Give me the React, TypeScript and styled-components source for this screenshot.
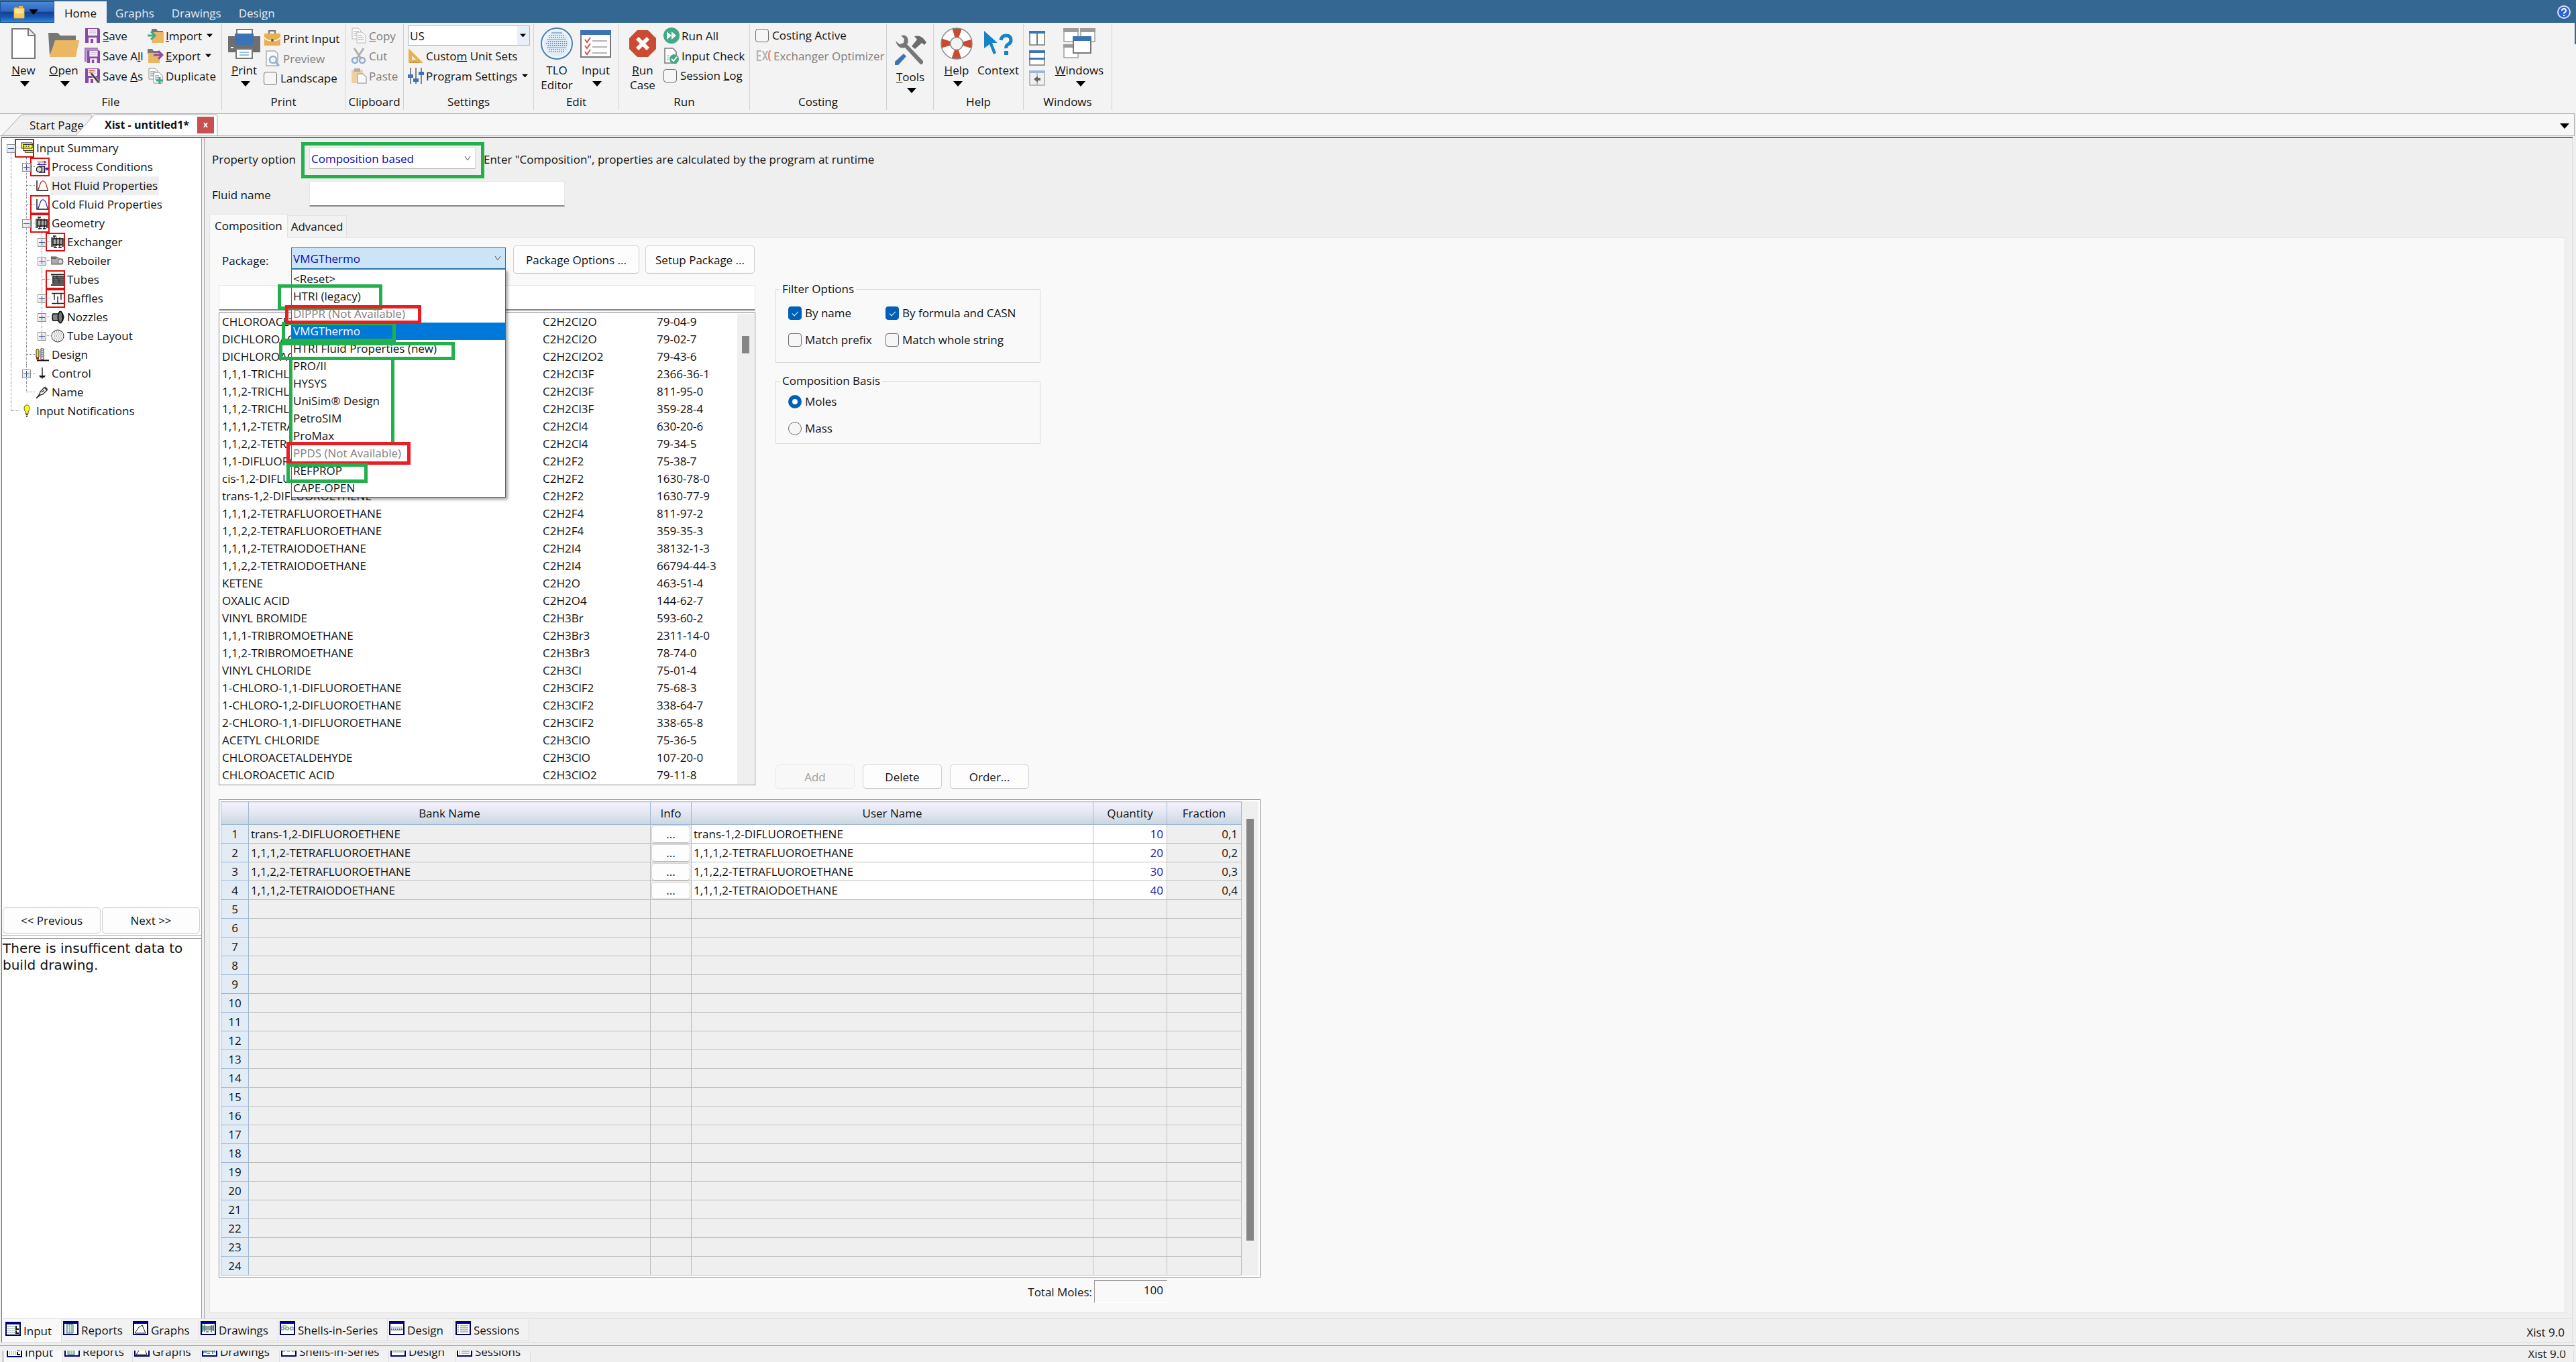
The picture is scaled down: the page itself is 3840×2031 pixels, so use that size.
import React from "react";
import styled, { createGlobalStyle, css } from "styled-components";

const GlobalStyle = createGlobalStyle`
  *, *::before, *::after { box-sizing: border-box; }
  body { margin: 0; background: #efefef; }
  body, button, input, select, table {
    font-family: "Open Sans", "Noto Sans", sans-serif;
    font-size: 17px;
    color: #111;
  }
  button { cursor: default; }
  ul { list-style: none; margin: 0; padding: 0; }
`;

const GREEN = "#22b04c";
const RED = "#ea1c24";

/* ---------- shell ---------- */

const Page = styled.div`
  min-height: 100vh;
  display: flex;
  flex-direction: column;
  line-height: 22px;
  white-space: nowrap;
`;

const TitleBar = styled.header`
  display: flex;
  align-items: stretch;
  height: 34px;
  padding-top: 2px;
  background: #346792;
`;

const AppButton = styled.button`
  width: 81px;
  display: flex;
  align-items: center;
  gap: 5px;
  padding: 0 0 0 19px;
  border: 1px solid #1b4f9a;
  background: linear-gradient(#4b86d8 0, #2f68c0 45%, #12408f 52%, #1b57b5 75%, #2f8ade 100%);
`;

const MenuTab = styled.button<{ $active?: boolean }>`
  border: 0;
  padding: 2px ${(p) => (p.$active ? 15 : 13)}px 0;
  background: ${(p) => (p.$active ? "#f3f3f3" : "transparent")};
  color: ${(p) => (p.$active ? "#111" : "#e8eef5")};
`;

const TitleHelp = styled.button`
  margin-left: auto;
  padding: 0 8px 0 0;
  border: 0;
  background: none;
  display: flex;
  align-items: center;
`;

/* ---------- ribbon ---------- */

const Ribbon = styled.div`
  display: flex;
  padding: 2px 0 5px;
  min-height: 135px;
  background: linear-gradient(#346792, #346792) right top / 2px 32px no-repeat, #f3f3f3;
`;

const Group = styled.section<{ $w: number }>`
  width: ${(p) => p.$w}px;
  display: flex;
  flex-direction: column;
  justify-content: space-between;
  border-right: 1px solid #d2d2d2;
`;

const GroupBody = styled.div<{ $pad?: number; $top?: number }>`
  display: flex;
  padding-left: ${(p) => p.$pad ?? 6}px;
  padding-top: ${(p) => p.$top ?? 0}px;
`;

const GroupName = styled.div`
  text-align: center;
  line-height: 24px;
`;

const Big = styled.button<{ $w: number }>`
  width: ${(p) => p.$w}px;
  padding: 5px 0 0;
  border: 0;
  background: none;
  display: flex;
  flex-direction: column;
  align-items: center;
  line-height: 22px;
  > svg { margin-bottom: 5px; }
`;

const ArrowLine = styled.span`
  height: 18px;
  padding: 0 0 0 4px;
  display: flex;
  align-items: center;
`;

const Stack = styled.div<{ $w: number; $top?: number }>`
  width: ${(p) => p.$w}px;
  padding-top: ${(p) => p.$top ?? 2}px;
`;

const Small = styled.button<{ $off?: boolean }>`
  height: 30px;
  padding: 0;
  border: 0;
  background: none;
  display: flex;
  align-items: center;
  gap: 3px;
  color: ${(p) => (p.$off ? "#7c7c7c" : "#111")};
  > svg:first-child { opacity: ${(p) => (p.$off ? 0.55 : 1)}; }
  > svg:last-child:not(:first-child) { margin-left: 4px; }
`;

const CheckLabel = styled.label`
  height: 30px;
  display: flex;
  align-items: center;
  gap: 5px;
`;

const Check = styled.input`
  appearance: none;
  flex: none;
  width: 20px;
  height: 20px;
  margin: 0;
  border: 1px solid #6b6b6b;
  border-radius: 4px;
  background: #f6f6f6;
  display: grid;
  place-items: center;
  &:checked { background: #005fb8; border-color: #005fb8; }
  &:checked::after {
    content: "";
    width: 5px;
    height: 9px;
    margin-bottom: 2px;
    border: solid #fff;
    border-width: 0 1px 1px 0;
    transform: rotate(45deg);
  }
`;

const Radio = styled.input`
  appearance: none;
  width: 20px;
  height: 20px;
  margin: 0;
  border: 1px solid #6b6b6b;
  border-radius: 50%;
  background: #f6f6f6;
  &:checked { border: 6px solid #005fb8; background: #fff; }
`;

const SelectBox = styled.div`
  position: relative;
  display: grid;
  align-items: center;
  > select, > svg { grid-area: 1 / 1; }
  > svg { justify-self: end; margin-right: 6px; pointer-events: none; z-index: 1; }
`;

const PackageBox = styled(SelectBox)`
  margin-top: 3px;
`;

const UnitSelect = styled.select`
  appearance: none;
  width: 182px;
  height: 30px;
  padding: 0 2px;
  border: 1px solid #a3b7d2;
  border-radius: 0;
  background: linear-gradient(to left, #e9eff8 18px, #fff 18px);
`;

/* ---------- document tabs ---------- */

const DocTabs = styled.div`
  height: 34px;
  display: flex;
  align-items: flex-end;
  border: 1px solid #adadad;
  border-left: 0;
  margin-right: 2px;
  background: #f7f7f7;
`;

const DocTab = styled.button<{ $active?: boolean }>`
  position: relative;
  height: 32px;
  padding: 0;
  border: 0;
  background: none;
  display: flex;
  align-items: center;
  gap: 12px;
  padding-left: 44px;
  width: ${(p) => (p.$active ? 212 : 112)}px;
  font-weight: ${(p) => (p.$active ? 700 : 400)};
  font-size: ${(p) => (p.$active ? 16 : 17)}px;
  z-index: ${(p) => (p.$active ? 2 : 1)};
  > svg { position: absolute; left: 0; top: 0; z-index: -1; }
`;

const CloseBox = styled.span`
  width: 25px;
  height: 25px;
  line-height: 23px;
  text-align: center;
  background: #c75050;
  color: #fff;
  font-size: 12px;
`;

const TabMenu = styled.button`
  margin: 0 7px 10px auto;
  border: 0;
  padding: 0;
  background: none;
  display: flex;
`;

/* ---------- work area ---------- */

const Work = styled.div`
  flex: 1;
  display: flex;
  margin: 1px 5px 0 2px;
  border: solid #6f6f6f;
  border-width: 2px 0 0 1px;
`;

const Side = styled.aside`
  width: 298px;
  display: flex;
  flex-direction: column;
  background: #fff;
  border-right: 1px solid #a0a0a0;
`;

const Splitter = styled.div`
  width: 4px;
  background: #f2f2f2;
  border-right: 1px solid #a0a0a0;
`;

const TreeBox = styled.ul`
  flex: none;
  height: 1147px;
  padding: 1px 0 0 2px;
`;

const Node = styled.li`
  display: flex;
  height: 28px;
  align-items: center;
`;

const Guide = styled.span<{ $v?: "full" | "top" | "bottom"; $h?: boolean }>`
  position: relative;
  width: 23px;
  height: 28px;
  display: grid;
  place-items: center;
  ${(p) => p.$v && css`
    &::before {
      content: "";
      position: absolute;
      left: 11px;
      top: ${p.$v === "bottom" ? "14px" : "0"};
      height: ${p.$v === "full" ? "28px" : "14px"};
      border-left: 1px dotted #8a8a8a;
    }`}
  ${(p) => p.$h && css`
    &::after {
      content: "";
      position: absolute;
      left: 12px;
      width: 12px;
      top: 13px;
      border-top: 1px dotted #8a8a8a;
    }`}
`;

const Expander = styled.button`
  position: relative;
  z-index: 1;
  width: 13px;
  height: 13px;
  padding: 0;
  border: 1px solid #919191;
  background: linear-gradient(135deg, #fff, #dcdcdc);
  display: grid;
  place-items: center;
`;

const IconCell = styled.span<{ $flag?: boolean }>`
  position: relative;
  width: 24px;
  height: 28px;
  display: grid;
  place-items: center;
  ${(p) => p.$flag && css`
    &::after {
      content: "";
      position: absolute;
      left: -6px;
      top: 0;
      width: 29px;
      height: 28px;
      border: 2px solid #dc1010;
    }`}
`;

const NodeText = styled.span<{ $selected?: boolean }>`
  line-height: 28px;
  padding: 0 2px;
  background: ${(p) => (p.$selected ? "#efefef" : "none")};
`;

const StepBar = styled.div`
  display: grid;
  grid-template-columns: 1fr 1fr;
  gap: 2px;
  padding: 0 2px 3px 1px;
  border-bottom: 1px solid #a0a0a0;
`;

const Button = styled.button<{ $w?: number; $h?: number }>`
  ${(p) => p.$w && `width: ${p.$w}px;`}
  height: ${(p) => p.$h ?? 36}px;
  padding: 0;
  border: 1px solid #d0d0d0;
  border-bottom-color: #bdbdbd;
  border-radius: 5px;
  background: #fdfdfd;
  &:disabled { background: #f8f8f8; border-color: #e8e8e8; color: #9c9c9c; }
`;

const Drawing = styled.div`
  flex: 1;
  margin-top: 3px;
  padding: 2px 0 0 1px;
  border-top: 1px solid #a0a0a0;
  font-family: "DejaVu Sans", sans-serif;
  font-size: 20px;
  line-height: 25px;
  white-space: normal;
`;

const Main = styled.main`
  flex: 1;
  min-width: 0;
  display: flex;
  flex-direction: column;
  padding: 0 10px 8px 7px;
  border-right: 1px solid #dcdcdc;
`;

const Form = styled.div`
  display: grid;
  grid-template-columns: 145px auto 1fr;
  padding: 14px 0 0 4px;
  row-gap: 18px;
  align-items: center;
`;

const FormLabel = styled.label`
  padding-top: 3px;
`;

const Hint = styled.span`
  padding: 3px 0 0 12px;
`;

const Marked = styled.div`
  position: relative;
  &::after {
    content: "";
    position: absolute;
    inset: -8px -13px -14px -12px;
    border: 5px solid ${GREEN};
    pointer-events: none;
  }
`;

const Select = styled.select<{ $open?: boolean }>`
  appearance: none;
  width: ${(p) => (p.$open ? 320 : 248)}px;
  height: 32px;
  padding: 0 2px;
  border: 1px solid ${(p) => (p.$open ? "#2a72ac" : "#dedede")};
  border-bottom-color: ${(p) => (p.$open ? "#2a72ac" : "#b4b4b4")};
  border-radius: 0;
  background: ${(p) => (p.$open ? "#cce4f7" : "#fff")};
  color: #0b0bb8;
`;

const TextBox = styled.input`
  height: 38px;
  width: 100%;
  border: 1px solid #e6e6e6;
  border-bottom: 2px solid #868686;
  background: #fff;
`;

const FluidBox = styled(TextBox)`
  width: 381px;
  grid-column: 2 / 4;
`;

const PageTabs = styled.div`
  display: flex;
  align-items: flex-end;
  margin-top: 11px;
`;

const PageTab = styled.button<{ $active?: boolean }>`
  height: ${(p) => (p.$active ? 36 : 33)}px;
  margin-bottom: ${(p) => (p.$active ? -1 : 0)}px;
  padding: 0 ${(p) => (p.$active ? 7 : 5)}px 2px;
  border: 1px solid #e3e3e3;
  border-bottom: 0;
  border-left-width: ${(p) => (p.$active ? 1 : 0)}px;
  background: ${(p) => (p.$active ? "#f9f9f9" : "#f2f2f2")};
  z-index: 1;
`;

const Sheet = styled.div`
  flex: 1;
  border: 1px solid #e3e3e3;
  background: #f9f9f9;
  padding: 11px 13px 5px;
`;

const PackageRow = styled.div`
  display: flex;
  align-items: flex-start;
  padding-left: 5px;
`;

const PackageLabel = styled.label`
  width: 103px;
  padding-top: 12px;
`;

const PackageButtons = styled.div`
  display: flex;
  gap: 9px;
  margin-left: 11px;
`;

const Popup = styled.ul`
  position: absolute;
  left: 0;
  top: 32px;
  width: 320px;
  z-index: 5;
  border: 1px solid #2a72ac;
  background: #fff;
  box-shadow: 3px 3px 4px rgba(0, 0, 0, 0.35);
  padding: 1px 0 0;
`;

const Option = styled.li<{ $state?: "off" | "on" }>`
  line-height: 26px;
  padding-left: 2px;
  color: ${(p) => (p.$state === "off" ? "#808080" : p.$state === "on" ? "#fff" : "#111")};
  background: ${(p) => (p.$state === "on" ? "#0078d7" : "none")};
`;

type MarkProps = { $x: number; $y: number; $w: number; $h: number; $c: string; $sides?: boolean };
const Mark = styled.span<MarkProps>`
  position: absolute;
  z-index: 6;
  left: ${(p) => p.$x}px;
  top: ${(p) => p.$y}px;
  width: ${(p) => p.$w}px;
  height: ${(p) => p.$h}px;
  border: 5px solid ${(p) => p.$c};
  ${(p) => p.$sides && "border-top: 0; border-bottom: 0;"}
  pointer-events: none;
`;

const Upper = styled.div`
  display: flex;
  gap: 30px;
  margin-top: 17px;
`;

const BankCol = styled.div`
  width: 800px;
  padding-bottom: 5px;
`;

const BankFrame = styled.div`
  margin-top: 3px;
  height: 705px;
  display: flex;
  border: 1px solid #828790;
  background: #fff;
`;

const BankTable = styled.table`
  flex: 1;
  table-layout: fixed;
  border-collapse: collapse;
  align-self: flex-start;
  td { height: 26px; padding: 0 0 0 4px; line-height: 26px; }
`;

const BankTrack = styled.div`
  width: 25px;
  margin: 1px;
  padding: 33px 7px 0;
  background: #efefef;
`;

const Thumb = styled.div<{ $h: number }>`
  height: ${(p) => p.$h}px;
  background: #858585;
`;

const Options = styled.div`
  display: flex;
  flex-direction: column;
`;

const FieldBox = styled.fieldset`
  width: 395px;
  margin: 0 0 21px;
  padding: 15px 0 18px 18px;
  border: 1px solid #dadada;
  display: grid;
  grid-template-columns: 145px 1fr;
  row-gap: 10px;
  > legend { padding: 0 3px; margin-left: -12px; line-height: 12px; }
`;

const RadioBox = styled(FieldBox)`
  grid-template-columns: 1fr;
  margin: 0;
  padding: 10px 0 7px 18px;
`;

const ListButtons = styled.div`
  display: flex;
  gap: 12px;
  margin-top: auto;
`;

const GridFrame = styled.div`
  width: 1553px;
  margin-top: 16px;
  display: flex;
  justify-content: space-between;
  padding: 2px;
  border: 1px solid #828790;
  background: #fff;
`;

const MixTable = styled.table`
  width: 1522px;
  table-layout: fixed;
  border-collapse: collapse;
  th { font-weight: 400; padding: 0; border: 1px solid #9db9d6; }
  thead th { height: 34px; background: linear-gradient(#f5f1fd, #e2e6f1 50%, #cbd6e0); }
  tbody th { background: #e3ebf5; }
`;

const Cell = styled.td<{ $white?: boolean; $right?: boolean; $blue?: boolean }>`
  height: 28px;
  line-height: 26px;
  padding: ${(p) => (p.$right ? "0 5px 0 0" : "0 0 0 3px")};
  text-align: ${(p) => (p.$right ? "right" : "left")};
  border: 1px solid #bdbdbd;
  background: ${(p) => (p.$white ? "#fff" : "#efefef")};
  color: ${(p) => (p.$blue ? "#1a1ab0" : "#111")};
`;

const InfoCell = styled(Cell)`
  padding: 0 1px;
`;

const InfoButton = styled(Button)`
  display: block;
  width: 100%;
  height: 26px;
  line-height: 18px;
`;

const GridTrack = styled.div`
  width: 25px;
  padding: 26px 7px 0;
  background: #efefef;
`;

const TotalRow = styled.div`
  width: 1414px;
  margin-top: 4px;
  display: flex;
  justify-content: flex-end;
  align-items: flex-start;
  gap: 3px;
`;

const TotalLabel = styled.label`
  padding-top: 7px;
`;

const TotalBox = styled.output`
  width: 109px;
  height: 34px;
  padding: 3px 5px 0 0;
  text-align: right;
  border: 1px solid #fff;
  border-top-color: #a0a0a0;
  border-left-color: #a0a0a0;
  background: #f9f9f9;
`;

/* ---------- bottom tabs and status ---------- */

const Footer = styled.footer`
  display: flex;
  align-items: flex-start;
  justify-content: space-between;
  height: 36px;
  margin: 0 5px 0 2px;
  border: 1px solid #dedede;
  border-left-color: #6f6f6f;
`;

const FooterTabs = styled.nav`
  display: flex;
`;

const FooterTab = styled.button<{ $active?: boolean; $w: number }>`
  width: ${(p) => p.$w}px;
  height: ${(p) => (p.$active ? 35 : 33)}px;
  padding: 0 0 0 ${(p) => (p.$active ? 5 : 2)}px;
  border: 0;
  border-right: 1px solid #dedede;
  border-bottom: 1px solid #dedede;
  background: ${(p) => (p.$active ? "#f9f9f9" : "#f2f2f2")};
  display: flex;
  align-items: center;
  gap: 4px;
  > svg { margin-bottom: 6px; }
`;

const Version = styled.span`
  padding: 9px 11px 0 0;
`;

const Rule = styled.div`
  height: 5px;
  margin-right: 2px;
  border-bottom: 1px solid #a9a9a9;
`;

const Echo = styled.div`
  height: 24px;
  padding: 7px 0 0 2px;
  > div { height: 17px; overflow: hidden; display: flex; flex-direction: column; justify-content: flex-end; }
`;

const EchoFooter = styled(Footer)`
  flex: none;
  margin: 0 3px -3px 2px;
`;

/* ---------- icons ---------- */

type P = { children: React.ReactNode; w?: number; h?: number; vb?: string };
const Svg = ({ children, w = 24, h = 24, vb }: P) => (
  <svg width={w} height={h} viewBox={vb ?? `0 0 ${w} ${h}`} fill="none" aria-hidden="true">{children}</svg>
);
const Down = ({ s = 14 }: { s?: number }) => (
  <svg width={s} height={8} viewBox="0 0 14 8" aria-hidden="true"><path d="M0 0h14L7 8z" fill="#000" /></svg>
);
const Caret = () => (
  <Svg w={12} h={8}><path d="M2 1l4 6 4-6" stroke="#555" strokeWidth="1" /></Svg>
);
const Folder = () => (
  <Svg w={18} h={20}>
    <path d="M2 2h4v3H2z" fill="#d79a2b" /><path d="M8 1h6v4H8z" fill="#e9b64c" />
    <path d="M1 4h15v15H1z" fill="#ffe48c" stroke="#d7a23a" /><path d="M2 12h13v6H2z" fill="#f7c95c" />
  </Svg>
);
const NewIcon = () => (
  <Svg w={48} h={48}><path d="M7 2h25l9 9v35H7z" fill="#fff" stroke="#777" strokeWidth="2" /><path d="M31 2v10h10" fill="#eee" stroke="#777" strokeWidth="2" /></Svg>
);
const OpenIcon = () => (
  <Svg w={48} h={48}><path d="M1 8h14l4 4h23v8H12L3 42z" fill="#777" /><path d="M11 19h36l-5 25H3z" fill="#eab763" /></Svg>
);
const Disk = () => (
  <>
    <path d="M1 1h20l2 2v20H1z" fill="#8a49a8" /><path d="M5 2h14v10H5z" fill="#f5f1f7" />
    <path d="M7 5h10M7 8h10" stroke="#b9b3bd" /><path d="M6 15h12v8H6z" fill="#f5f1f7" /><path d="M9 17h4v6H9z" fill="#8a49a8" />
  </>
);
const SaveIcon = () => <Svg><Disk /></Svg>;
const SaveAllIcon = () => (
  <Svg><path d="M0 0h20v3H3v18H0z" fill="#a878c0" /><g transform="translate(3 3) scale(.87)"><Disk /></g></Svg>
);
const SaveAsIcon = () => (
  <Svg><Disk /><path d="M6 4h9M6 7h7" stroke="#d65745" strokeWidth="1.5" /><path d="M8 9l3-2 11 13 1 4-4-2z" fill="#444" stroke="#f3f3f3" strokeWidth=".8" /></Svg>
);
const ImportIcon = () => (
  <Svg><path d="M6 2h7l2 3h8v4H6z" fill="#777" /><path d="M9 7h15v16H6l2-9z" fill="#eab763" /><path d="M0 12h8M5 6l6 6-6 6" stroke="#43a883" strokeWidth="3" /></Svg>
);
const ExportIcon = () => (
  <Svg><path d="M0 2h7l2 3h8v4H0z" fill="#777" /><path d="M1 8h17v15H1z" fill="#eab763" /><path d="M9 11h11M16 5l6 6-6 6" stroke="#8a49a8" strokeWidth="3" /></Svg>
);
const Sheets = () => (
  <>
    <path d="M2 1h9l4 4v12H2z" fill="#fff" stroke="#8a8a8a" /><path d="M4 6h8M4 9h8M4 12h8" stroke="#3f78b4" />
    <path d="M9 7h8l5 5v11H9z" fill="#fff" stroke="#8a8a8a" /><path d="M11 12h6M11 15h8M11 18h8" stroke="#3f78b4" />
  </>
);
const CopyIcon = () => <Svg><Sheets /></Svg>;
const DuplicateIcon = () => <Svg><Sheets /><path d="M18 14v10M13 19h10" stroke="#43a883" strokeWidth="3" /></Svg>;
const PrintIcon = () => (
  <Svg w={48} h={48}>
    <path d="M13 3h23v12H13z" fill="#fff" stroke="#777" strokeWidth="2" />
    <path d="M0 13h10v12h28V13h10v24H0z" fill="#6f6f6f" /><path d="M10 9h28v14q0 3-3 3H13q-3 0-3-3z" fill="#3b74b4" />
    <path d="M4 30h4" stroke="#fff" strokeWidth="2" /><path d="M12 32h24v14H12z" fill="#fff" stroke="#777" strokeWidth="2" />
    <path d="M17 37h14M17 41h14" stroke="#9dbcdc" strokeWidth="2" />
  </Svg>
);
const Briefcase = () => (
  <Svg w={26} h={24}><path d="M8 5V1h9v4" stroke="#777" strokeWidth="2" /><path d="M1 5h24v18H1z" fill="#eab04f" /><path d="M1 11q5 6 12 4 7 2 12-4" stroke="#fff" strokeWidth="1.5" /><circle cx="13" cy="15" r="2" fill="#555" /></Svg>
);
const PreviewIcon = () => (
  <Svg w={26} h={24}><path d="M4 1h13l4 4v18H4z" fill="#fff" stroke="#777" strokeWidth="1.5" /><circle cx="14" cy="14" r="5" stroke="#3f78b4" strokeWidth="2.5" fill="#fff" /><path d="M18 18l5 5" stroke="#3f78b4" strokeWidth="3" /></Svg>
);
const CutIcon = () => (
  <Svg><path d="M5 1l10 15M19 1L9 16" stroke="#777" strokeWidth="3" /><circle cx="6" cy="19" r="4" stroke="#3f78b4" strokeWidth="2.5" /><circle cx="17" cy="19" r="4" stroke="#3f78b4" strokeWidth="2.5" /></Svg>
);
const PasteIcon = () => (
  <Svg><path d="M1 3h17v20H1z" fill="#eab763" /><path d="M5 1h9v5H5z" fill="#777" /><path d="M10 9h8l5 5v9H10z" fill="#fff" stroke="#777" strokeWidth="1.5" /></Svg>
);
const UnitsIcon = () => (
  <Svg><path d="M1 1l22 22H1zM6 12v6h6z" fill="#eab04f" fillRule="evenodd" /><path d="M4 21v2M8 21v2M12 21v2M16 21v2" stroke="#555" /></Svg>
);
const SlidersIcon = () => (
  <Svg><path d="M4 0v24M12 0v24M20 0v24" stroke="#666" strokeWidth="1.6" /><path d="M0 10h8v5H0zM8 16h8v5H8zM16 6h8v5h-8z" fill="#3b74b4" /></Svg>
);
const TloIcon = () => (
  <Svg w={48} h={48}>
    <circle cx="24" cy="24" r="23" fill="#f2f6fb" stroke="#4a7fb8" strokeWidth="2" />
    <circle cx="24" cy="24" r="19" fill="#e3edf7" />
    {[...Array(9)].map((_, i) => (
      <path key={i} d={`M${8 + Math.abs(i - 4)} ${12 + i * 3}H${40 - Math.abs(i - 4)}`} stroke="#4a7fb8" strokeWidth="1.5" strokeDasharray="1.5 1.5" strokeDashoffset={i % 2 ? 1.5 : 0} />
    ))}
    <path d="M16 8h16" stroke="#4a7fb8" />
  </Svg>
);
const InputIcon = () => (
  <Svg w={48} h={48}>
    <path d="M2 5h44v39H2z" fill="#fff" stroke="#777" strokeWidth="2" /><path d="M1 4h46v7H1z" fill="#3b74b4" />
    <path d="M8 18l3 4 5-7M8 27l3 4 5-7M8 36l3 4 5-7" stroke="#d05050" strokeWidth="2" /><path d="M19 20h22M19 29h22M19 38h22" stroke="#b4b4b4" strokeWidth="2" />
  </Svg>
);
const StopIcon = () => (
  <Svg w={48} h={48}><path d="M16 4h16l12 12v16L32 44H16L4 32V16z" fill="#ca4a32" /><path d="M16 16l16 16M32 16L16 32" stroke="#fff" strokeWidth="6" /></Svg>
);
const RunAllIcon = () => (
  <Svg><circle cx="12" cy="12" r="12" fill="#43a883" /><path d="M5 6l7 6-7 6zM12 6l7 6-7 6z" fill="#fff" /></Svg>
);
const InputCheckIcon = () => (
  <Svg><path d="M2 1h12l5 5v17H2z" fill="#fff" stroke="#777" strokeWidth="1.5" /><path d="M5 12h4M5 15h3M5 18h3" stroke="#999" /><circle cx="16" cy="17" r="7" fill="#43a883" /><path d="M12 17l3 3 5-6" stroke="#fff" strokeWidth="2" /></Svg>
);
const ExIcon = () => (
  <Svg><path d="M1 2h22v20H1z" fill="#fbfbfb" /><path d="M9 5H3v14h6M3 12h5M11 5l7 14M18 5l-7 14" stroke="#888" strokeWidth="2.4" /><path d="M22 4q-4 8 0 16" stroke="#e03020" strokeWidth="2.4" /></Svg>
);
const ToolsIcon = () => (
  <Svg w={48} h={48}>
    <path d="M2 10l6 5 6-2 1-6-5-5q8-2 10 4t-1 9l24 25q1 5-4 5L16 20Q6 23 2 10z" fill="#777" />
    <path d="M26 18l8-10-4-5q8-2 13 3l5 6-3 4-4-3-10 9z" fill="#6b6b6b" /><path d="M14 29l4 4L6 46H1v-5z" fill="#3b74b4" />
  </Svg>
);
const HelpRing = () => (
  <Svg w={48} h={48}>
    <circle cx="24" cy="24" r="16" stroke="#fff" strokeWidth="14" />
    <circle cx="24" cy="24" r="16" stroke="#ca4a32" strokeWidth="14" strokeDasharray="10 15.13" strokeDashoffset="5" />
    <circle cx="24" cy="24" r="23" stroke="#888" strokeWidth="1.5" /><circle cx="24" cy="24" r="9.5" stroke="#888" strokeWidth="1.5" />
  </Svg>
);
const ContextIcon = () => (
  <Svg w={48} h={48}><path d="M3 5l20 18h-8l6 15-4 2-6-15-8 6z" fill="#1583c6" /><path d="M28 19q1-7 8-7t7 7q0 4-4 6t-3 6" stroke="#1583c6" strokeWidth="5" /><path d="M33 35h6v6h-6z" fill="#1583c6" /></Svg>
);
const TileV = () => <Svg><path d="M1 3h22v19H1z" fill="#fff" stroke="#777" strokeWidth="1.5" /><path d="M0 1h24v4H0z" fill="#3b74b4" /><path d="M12 5v17" stroke="#777" strokeWidth="2" /></Svg>;
const TileH = () => <Svg><path d="M1 2h22v20H1z" fill="#fff" stroke="#777" strokeWidth="1.5" /><path d="M0 0h24v4H0zM0 11h24v3H0z" fill="#3b74b4" /></Svg>;
const TileP = () => <Svg><path d="M1 2h22v20H1z" fill="#f0f0f0" stroke="#aaa" strokeWidth="1.5" /><path d="M0 0h24v4H0z" fill="#9db9da" /><path d="M12 4v4M12 17v5" stroke="#888" /><path d="M7 13l6-5v3h4v4h-4v3z" fill="#666" /></Svg>;
const WindowsIcon = () => (
  <Svg w={48} h={48}>
    <path d="M1 4h21v17H1zM26 4h21v17H26zM1 28h21v17H1z" fill="#fff" stroke="#a0a0a0" strokeWidth="1.5" />
    <path d="M0 1h23v6H0zM25 1h23v6H25zM0 25h14v5H0z" fill="#9b9b9b" />
    <path d="M15 15h26v23H15z" fill="#fff" stroke="#777" strokeWidth="2" /><path d="M14 13h28v7H14z" fill="#3b74b4" />
  </Svg>
);

const Pages = () => <Svg w={20} h={18} vb="0 0 22 20"><path d="M2 1h18v9H2zM5 4h17v10H5z" fill="#ff3" stroke="#222" /><path d="M8 14h14v3H8z" fill="#ff3" stroke="#222" /><path d="M5 4h12M5 7h12" stroke="#222" strokeDasharray="2 2" /></Svg>;
const Process = () => <Svg w={20} h={20} vb="0 0 22 22"><path d="M3 3h14M14 1l3 2-3 2" stroke="#d01c1c" strokeWidth="1.4" /><path d="M18 7H4l3-2" stroke="#1c1cd0" strokeWidth="1.4" /><path d="M5 10h10v9H5z" fill="#bbb" /><circle cx="6" cy="15" r="4.5" fill="#ddd" stroke="#111" strokeWidth="1.4" /><path d="M6 10h9v10H6" stroke="#111" strokeWidth="1.4" /><path d="M15 14h5M18 12l3 2-3 2" stroke="#1c1cd0" strokeWidth="1.6" /></Svg>;
const Curve = ({ c }: { c: string }) => <Svg w={20} h={18}><path d="M2 1v15h17" stroke="#111" strokeWidth="1.4" /><path d="M4 15C8 2 9 1 12 2s4 5 6 13" stroke={c} strokeWidth="1.3" /></Svg>;
const Shell = () => <Svg w={20} h={20}><path d="M2 4h16v11H2z" fill="#aaa" /><path d="M1 3v14M3 3v14M8 3v13M13 3v13M17 4v13M19 4v13M3 5h14M3 14h14" stroke="#111" strokeWidth="1.3" /><path d="M3 1h5M5 1v3M4 18h5M6 15v3M11 18h5M13 15v3" stroke="#111" strokeWidth="1.3" /></Svg>;
const Reboiler = () => <Svg w={20} h={16}><path d="M0 2h8l5 3h4q2 4 0 8H0z" fill="#aaa" stroke="#555" /><circle cx="14" cy="9" r="3.5" fill="#ddd" stroke="#666" /><path d="M0 4h8" stroke="#666" strokeWidth="2" /></Svg>;
const Tubes = () => <Svg w={20} h={18}><path d="M0 1.5h20M2 5h18M2 8h18M2 11h18M2 14h18M0 17h20" stroke="#222" strokeWidth="1.8" /><path d="M3 3v12M9 3v4M12 9v5" stroke="#222" /></Svg>;
const Baffles = () => <Svg w={20} h={18}><path d="M1 1.5h18M1 16.5h18M5 2v9M10 6v10M15 2v9" stroke="#222" strokeWidth="1.4" /></Svg>;
const Nozzle = () => <Svg w={20} h={20}><path d="M3 5h10v10H3q-2-5 0-10z" fill="#888" stroke="#111" strokeWidth="1.6" /><ellipse cx="14" cy="10" rx="3.5" ry="8.5" fill="#777" stroke="#111" strokeWidth="1.8" /><path d="M17 4l2 6-2 6" stroke="#111" strokeWidth="1.6" /></Svg>;
const Layout = () => <Svg w={20} h={20}><circle cx="10" cy="10" r="9" fill="#fff" stroke="#222" />{[4, 7, 10, 13, 16].map((y) => <path key={y} d={`M${y % 2 ? 4 : 5} ${y}h12`} stroke="#333" strokeWidth="1.2" strokeDasharray="1.2 1.6" />)}</Svg>;
const DesignIcon = () => <Svg w={20} h={20}><path d="M1 3l2-2 2 2v11H1z" fill="#e8dc50" stroke="#222" /><path d="M1 14h4v3H1z" fill="#a22" /><path d="M8 1h4v16H8z" fill="#fff" stroke="#222" /><path d="M9 4h2M9 7h2M9 10h2M9 13h2" stroke="#222" /><path d="M2 18.5h18" stroke="#111" strokeWidth="2" /></Svg>;
const ControlIcon = () => <Svg w={20} h={20}><path d="M10 1v12" stroke="#333" strokeWidth="1.6" /><path d="M5 13h10l-2 3H7z" fill="#111" /><path d="M10 16v2" stroke="#111" /></Svg>;
const NameIcon = () => <Svg w={20} h={20}><path d="M1 19l5-6 1-4 6-6 4 4-6 6-4 1z" fill="#fff" stroke="#222" strokeWidth="1.3" /><path d="M9 10l4-3M14 2l4 4" stroke="#222" strokeWidth="1.4" /></Svg>;
const Bulb = () => <Svg w={20} h={20}><path d="M10 1q4 0 4 5 0 3-2 5v3H8v-3Q6 9 6 6q0-5 4-5z" fill="#ff0" stroke="#555" /><path d="M8.5 15.5h3M10 17v2" stroke="#111" strokeWidth="1.5" /></Svg>;

const Pane = ({ children }: { children: React.ReactNode }) => (
  <Svg w={23} h={21}><path d="M1 1h21v19H1z" fill="#fff" stroke="#00006a" strokeWidth="2" /><path d="M0 0h23v4H0z" fill="#00007a" />{children}</Svg>
);
const footTabs: { name: string; w: number; icon: React.ReactNode }[] = [
  { name: "Input", w: 89, icon: <Pane><path d="M3 7h12M3 10h12M3 13h12M3 16h12" stroke="#688" strokeDasharray="2 1" /><path d="M16 6v5h4M16 13v4h4" stroke="#111" strokeWidth="2" /></Pane> },
  { name: "Reports", w: 104, icon: <Pane><path d="M5 5h10v13H5zM7 5v13M10 5v13M13 5v13" stroke="#377" /></Pane> },
  { name: "Graphs", w: 101, icon: <Pane><path d="M3 18L9 9l5-3 5 12z" stroke="#111" /></Pane> },
  { name: "Drawings", w: 118, icon: <Pane><path d="M3 7h17v7H3z" fill="#9a9a9a" /><path d="M3 5v11M6 5v11M16 6v11M19 6v9M8 16h4" stroke="#2a8080" strokeWidth="1.5" /></Pane> },
  { name: "Shells-in-Series", w: 163, icon: <Pane><path d="M2 9h4v4H2zM9 9h4v4H9zM16 9h4v4h-4zM6 11h3M13 11h3M4 7h6" stroke="#577" /></Pane> },
  { name: "Design", w: 99, icon: <Pane><path d="M3 9h17M3 14h17" stroke="#999" /><path d="M3 12h17" stroke="#377" strokeWidth="2" strokeDasharray="2 1" /></Pane> },
  { name: "Sessions", w: 112, icon: <Pane><path d="M3 7h2M3 10h2M3 13h2M3 16h2M7 7h12M7 10h12M7 13h12M7 16h12" stroke="#777" /></Pane> },
];

/* ---------- data ---------- */

type TreeNode = { text: string; depth: number; icon: React.ReactNode; flag?: boolean; box?: "+" | "-"; last?: boolean; selected?: boolean };
const tree: TreeNode[] = [
  { text: "Input Summary", depth: 0, icon: <Pages />, flag: true, box: "-" },
  { text: "Process Conditions", depth: 1, icon: <Process />, flag: true, box: "+" },
  { text: "Hot Fluid Properties", depth: 1, icon: <Curve c="#c02020" />, selected: true },
  { text: "Cold Fluid Properties", depth: 1, icon: <Curve c="#2020b0" />, flag: true },
  { text: "Geometry", depth: 1, icon: <Shell />, flag: true, box: "-" },
  { text: "Exchanger", depth: 2, icon: <Shell />, flag: true, box: "+" },
  { text: "Reboiler", depth: 2, icon: <Reboiler />, box: "+" },
  { text: "Tubes", depth: 2, icon: <Tubes />, flag: true },
  { text: "Baffles", depth: 2, icon: <Baffles />, flag: true, box: "+" },
  { text: "Nozzles", depth: 2, icon: <Nozzle />, box: "+" },
  { text: "Tube Layout", depth: 2, icon: <Layout />, box: "+", last: true },
  { text: "Design", depth: 1, icon: <DesignIcon /> },
  { text: "Control", depth: 1, icon: <ControlIcon />, box: "+" },
  { text: "Name", depth: 1, icon: <NameIcon />, last: true },
  { text: "Input Notifications", depth: 0, icon: <Bulb />, last: true },
];

const bank: string[][] = [
  ["CHLOROACETYL CHLORIDE", "C2H2Cl2O", "79-04-9"],
  ["DICHLOROACETALDEHYDE", "C2H2Cl2O", "79-02-7"],
  ["DICHLOROACETIC ACID", "C2H2Cl2O2", "79-43-6"],
  ["1,1,1-TRICHLOROFLUOROETHANE", "C2H2Cl3F", "2366-36-1"],
  ["1,1,2-TRICHLOROFLUOROETHANE", "C2H2Cl3F", "811-95-0"],
  ["1,1,2-TRICHLOROFLUOROETHANE", "C2H2Cl3F", "359-28-4"],
  ["1,1,1,2-TETRACHLOROETHANE", "C2H2Cl4", "630-20-6"],
  ["1,1,2,2-TETRACHLOROETHANE", "C2H2Cl4", "79-34-5"],
  ["1,1-DIFLUOROETHENE", "C2H2F2", "75-38-7"],
  ["cis-1,2-DIFLUOROETHENE", "C2H2F2", "1630-78-0"],
  ["trans-1,2-DIFLUOROETHENE", "C2H2F2", "1630-77-9"],
  ["1,1,1,2-TETRAFLUOROETHANE", "C2H2F4", "811-97-2"],
  ["1,1,2,2-TETRAFLUOROETHANE", "C2H2F4", "359-35-3"],
  ["1,1,1,2-TETRAIODOETHANE", "C2H2I4", "38132-1-3"],
  ["1,1,2,2-TETRAIODOETHANE", "C2H2I4", "66794-44-3"],
  ["KETENE", "C2H2O", "463-51-4"],
  ["OXALIC ACID", "C2H2O4", "144-62-7"],
  ["VINYL BROMIDE", "C2H3Br", "593-60-2"],
  ["1,1,1-TRIBROMOETHANE", "C2H3Br3", "2311-14-0"],
  ["1,1,2-TRIBROMOETHANE", "C2H3Br3", "78-74-0"],
  ["VINYL CHLORIDE", "C2H3Cl", "75-01-4"],
  ["1-CHLORO-1,1-DIFLUOROETHANE", "C2H3ClF2", "75-68-3"],
  ["1-CHLORO-1,2-DIFLUOROETHANE", "C2H3ClF2", "338-64-7"],
  ["2-CHLORO-1,1-DIFLUOROETHANE", "C2H3ClF2", "338-65-8"],
  ["ACETYL CHLORIDE", "C2H3ClO", "75-36-5"],
  ["CHLOROACETALDEHYDE", "C2H3ClO", "107-20-0"],
  ["CHLOROACETIC ACID", "C2H3ClO2", "79-11-8"],
];

const packages: [string, ("off" | "on")?][] = [
  ["<Reset>"], ["HTRI (legacy)"], ["DIPPR (Not Available)", "off"], ["VMGThermo", "on"],
  ["HTRI Fluid Properties (new)"], ["PRO/II"], ["HYSYS"], ["UniSim® Design"], ["PetroSIM"],
  ["ProMax"], ["PPDS (Not Available)", "off"], ["REFPROP"], ["CAPE-OPEN"],
];

const mixture = [
  ["trans-1,2-DIFLUOROETHENE", "10", "0,1"],
  ["1,1,1,2-TETRAFLUOROETHANE", "20", "0,2"],
  ["1,1,2,2-TETRAFLUOROETHANE", "30", "0,3"],
  ["1,1,1,2-TETRAIODOETHANE", "40", "0,4"],
];

/* ---------- parts ---------- */

const RibbonBar = () => (
  <Ribbon>
    <Group $w={331}>
      <GroupBody>
        <Big $w={58}><NewIcon /><span><u>N</u>ew</span><ArrowLine><Down /></ArrowLine></Big>
        <Big $w={62}><OpenIcon /><span><u>O</u>pen</span><ArrowLine><Down /></ArrowLine></Big>
        <Stack $w={94}>
          <Small><SaveIcon /><span><u>S</u>ave</span></Small>
          <Small><SaveAllIcon /><span>Save A<u>l</u>l</span></Small>
          <Small><SaveAsIcon /><span>Save <u>A</u>s</span></Small>
        </Stack>
        <Stack $w={105}>
          <Small><ImportIcon /><span><u>I</u>mport</span><Down s={9} /></Small>
          <Small><ExportIcon /><span><u>E</u>xport</span><Down s={9} /></Small>
          <Small><DuplicateIcon /><span>Duplicate</span></Small>
        </Stack>
      </GroupBody>
      <GroupName>File</GroupName>
    </Group>
    <Group $w={184}>
      <GroupBody $pad={4}>
        <Big $w={58}><PrintIcon /><span><u>P</u>rint</span><ArrowLine><Down /></ArrowLine></Big>
        <Stack $w={115} $top={6}>
          <Small><Briefcase /><span>Print Input</span></Small>
          <Small $off><PreviewIcon /><span>Preview</span></Small>
          <CheckLabel><Check type="checkbox" />Landscape</CheckLabel>
        </Stack>
      </GroupBody>
      <GroupName>Print</GroupName>
    </Group>
    <Group $w={87}>
      <GroupBody $pad={8}>
        <Stack $w={78}>
          <Small $off disabled><CopyIcon /><span><u>C</u>opy</span></Small>
          <Small $off disabled><CutIcon /><span>Cut</span></Small>
          <Small $off disabled><PasteIcon /><span>Paste</span></Small>
        </Stack>
      </GroupBody>
      <GroupName>Clipboard</GroupName>
    </Group>
    <Group $w={194}>
      <GroupBody>
        <Stack $w={182}>
          <SelectBox><UnitSelect aria-label="Unit set"><option>US</option></UnitSelect><Down s={9} /></SelectBox>
          <Small><UnitsIcon /><span>Custo<u>m</u> Unit Sets</span></Small>
          <Small><SlidersIcon /><span>Pro<u>g</u>ram Settings</span><Down s={9} /></Small>
        </Stack>
      </GroupBody>
      <GroupName>Settings</GroupName>
    </Group>
    <Group $w={127}>
      <GroupBody>
        <Big $w={56}><TloIcon /><span>TLO</span><span>Editor</span></Big>
        <Big $w={60}><InputIcon /><span>Input</span><ArrowLine><Down /></ArrowLine></Big>
      </GroupBody>
      <GroupName>Edit</GroupName>
    </Group>
    <Group $w={195}>
      <GroupBody $pad={4}>
        <Big $w={62}><StopIcon /><span><u>R</u>un</span><span>Case</span></Big>
        <Stack $w={126}>
          <Small><RunAllIcon /><span>Run All</span></Small>
          <Small><InputCheckIcon /><span>Input Check</span></Small>
          <CheckLabel><Check type="checkbox" /><span>Session <u>L</u>og</span></CheckLabel>
        </Stack>
      </GroupBody>
      <GroupName>Run</GroupName>
    </Group>
    <Group $w={204}>
      <GroupBody $pad={8}>
        <Stack $w={190}>
          <CheckLabel><Check type="checkbox" />Costing Active</CheckLabel>
          <Small $off disabled><ExIcon /><span>Exchanger Optimizer</span></Small>
        </Stack>
      </GroupBody>
      <GroupName>Costing</GroupName>
    </Group>
    <Group $w={70}>
      <GroupBody $top={10}>
        <Big $w={58}><ToolsIcon /><span><u>T</u>ools</span><ArrowLine><Down /></ArrowLine></Big>
      </GroupBody>
    </Group>
    <Group $w={134}>
      <GroupBody $pad={4}>
        <Big $w={60}><HelpRing /><span><u>H</u>elp</span><ArrowLine><Down /></ArrowLine></Big>
        <Big $w={64}><ContextIcon /><span>Context</span></Big>
      </GroupBody>
      <GroupName>Help</GroupName>
    </Group>
    <Group $w={132}>
      <GroupBody $pad={8}>
        <Stack $w={34} $top={6}>
          <Small aria-label="Tile vertically"><TileV /></Small>
          <Small aria-label="Tile horizontally"><TileH /></Small>
          <Small aria-label="Previous pane"><TileP /></Small>
        </Stack>
        <Big $w={82}><WindowsIcon /><span><u>W</u>indows</span><ArrowLine><Down /></ArrowLine></Big>
      </GroupBody>
      <GroupName>Windows</GroupName>
    </Group>
  </Ribbon>
);

const Tree = () => (
  <TreeBox>
    {tree.map((n, i) => (
      <Node key={n.text}>
        {[...Array(n.depth)].map((_, d) => <Guide key={d} $v="full" />)}
        <Guide $v={i === 0 ? "bottom" : n.last ? "top" : "full"} $h>
          {n.box && (
            <Expander aria-label={n.box === "+" ? "Expand" : "Collapse"}>
              <Svg w={9} h={9}><path d={n.box === "+" ? "M0 4.5h9M4.5 0v9" : "M0 4.5h9"} stroke="#3a5a9a" /></Svg>
            </Expander>
          )}
        </Guide>
        <IconCell $flag={n.flag}>{n.icon}</IconCell>
        <NodeText $selected={n.selected}>{n.text}</NodeText>
      </Node>
    ))}
  </TreeBox>
);

const PackagePicker = () => (
  <PackageBox>
    <Select id="package" $open defaultValue="VMGThermo"><option>VMGThermo</option></Select>
    <Caret />
    <Popup role="listbox" aria-label="Package">
      {packages.map(([name, state]) => (
        <Option key={name} role="option" aria-selected={state === "on"} $state={state}>{name}</Option>
      ))}
    </Popup>
    <Mark $x={-20} $y={55} $w={156} $h={38} $c={GREEN} />
    <Mark $x={-14} $y={111} $w={170} $h={30} $c={GREEN} />
    <Mark $x={-18} $y={141} $w={262} $h={27} $c={GREEN} />
    <Mark $x={-3} $y={166} $w={157} $h={126} $c={GREEN} $sides />
    <Mark $x={-9} $y={86} $w={203} $h={28} $c={RED} />
    <Mark $x={-7} $y={290} $w={185} $h={34} $c={RED} />
    <Mark $x={-7} $y={322} $w={121} $h={29} $c={GREEN} />
  </PackageBox>
);

const BankList = () => (
  <BankCol>
    <TextBox aria-label="Search components" />
    <BankFrame>
      <BankTable>
        <colgroup><col /><col width={170} /><col width={123} /></colgroup>
        <tbody>
          {bank.map((r) => <tr key={r[2]}>{r.map((c, i) => <td key={i}>{c}</td>)}</tr>)}
        </tbody>
      </BankTable>
      <BankTrack><Thumb $h={26} /></BankTrack>
    </BankFrame>
  </BankCol>
);

const MixtureGrid = () => (
  <GridFrame>
    <MixTable>
      <colgroup><col width={41} /><col /><col width={61} /><col width={599} /><col width={110} /><col width={111} /></colgroup>
      <thead>
        <tr><th aria-label="Row" /><th>Bank Name</th><th>Info</th><th>User Name</th><th>Quantity</th><th>Fraction</th></tr>
      </thead>
      <tbody>
        {[...Array(24)].map((_, i) => {
          const m = mixture[i];
          return (
            <tr key={i}>
              <th>{i + 1}</th>
              <Cell>{m?.[0]}</Cell>
              <InfoCell>{m && <InfoButton>...</InfoButton>}</InfoCell>
              <Cell $white={!!m}>{m?.[0]}</Cell>
              <Cell $white={!!m} $right $blue>{m?.[1]}</Cell>
              <Cell $right>{m?.[2]}</Cell>
            </tr>
          );
        })}
      </tbody>
    </MixTable>
    <GridTrack><Thumb $h={629} /></GridTrack>
  </GridFrame>
);

const FooterContent = () => (
  <>
    <FooterTabs>
      {footTabs.map((t, i) => <FooterTab key={t.name} $w={t.w} $active={i === 0}>{t.icon}{t.name}</FooterTab>)}
    </FooterTabs>
    <Version>Xist 9.0</Version>
  </>
);

export default function App() {
  return (
    <Page>
      <GlobalStyle />
      <TitleBar>
        <AppButton aria-label="Application menu"><Folder /><Down /></AppButton>
        <MenuTab $active>Home</MenuTab>
        <MenuTab>Graphs</MenuTab>
        <MenuTab>Drawings</MenuTab>
        <MenuTab>Design</MenuTab>
        <TitleHelp aria-label="Help">
          <Svg w={20} h={20}><circle cx="10" cy="10" r="9" fill="#2f62d8" stroke="#dce6f8" strokeWidth="2" /><path d="M7 8q0-3 3-3t3 3q0 1.5-1.5 2.2T10 12.5M10 14v2" stroke="#fff" strokeWidth="2" /></Svg>
        </TitleHelp>
      </TitleBar>
      <RibbonBar />
      <DocTabs>
        <DocTab>
          <Svg w={140} h={32}><path d="M3 32L30 3q2-2 4-2h102v14l-18 17z" fill="#f0f0f0" stroke="#adadad" /></Svg>
          Start Page
        </DocTab>
        <DocTab $active>
          <Svg w={214} h={32}><path d="M0 33L28 2q1-1 3-1h179q2 0 2 2v30" fill="#fff" stroke="#adadad" /></Svg>
          Xist - untitled1*
          <CloseBox>x</CloseBox>
        </DocTab>
        <TabMenu aria-label="Document list"><Down /></TabMenu>
      </DocTabs>
      <Work>
        <Side>
          <Tree />
          <StepBar>
            <Button $h={39}>&lt;&lt; Previous</Button>
            <Button $h={39}>Next &gt;&gt;</Button>
          </StepBar>
          <Drawing>There is insufficent data to build drawing.</Drawing>
        </Side>
        <Splitter />
        <Main>
          <Form>
            <FormLabel htmlFor="option">Property option</FormLabel>
            <Marked>
              <SelectBox>
                <Select id="option"><option>Composition based</option></Select>
                <Caret />
              </SelectBox>
            </Marked>
            <Hint>Enter "Composition", properties are calculated by the program at runtime</Hint>
            <FormLabel htmlFor="fluid">Fluid name</FormLabel>
            <FluidBox id="fluid" />
          </Form>
          <PageTabs role="tablist">
            <PageTab $active role="tab">Composition</PageTab>
            <PageTab role="tab">Advanced</PageTab>
          </PageTabs>
          <Sheet>
            <PackageRow>
              <PackageLabel htmlFor="package">Package:</PackageLabel>
              <PackagePicker />
              <PackageButtons>
                <Button $w={188} $h={42}>Package Options ...</Button>
                <Button $w={163} $h={42}>Setup Package ...</Button>
              </PackageButtons>
            </PackageRow>
            <Upper>
              <BankList />
              <Options>
                <FieldBox>
                  <legend>Filter Options</legend>
                  <CheckLabel><Check type="checkbox" defaultChecked />By name</CheckLabel>
                  <CheckLabel><Check type="checkbox" defaultChecked />By formula and CASN</CheckLabel>
                  <CheckLabel><Check type="checkbox" />Match prefix</CheckLabel>
                  <CheckLabel><Check type="checkbox" />Match whole string</CheckLabel>
                </FieldBox>
                <RadioBox>
                  <legend>Composition Basis</legend>
                  <CheckLabel><Radio type="radio" name="basis" defaultChecked />Moles</CheckLabel>
                  <CheckLabel><Radio type="radio" name="basis" />Mass</CheckLabel>
                </RadioBox>
                <ListButtons>
                  <Button $w={118} disabled>Add</Button>
                  <Button $w={118}>Delete</Button>
                  <Button $w={118}>Order...</Button>
                </ListButtons>
              </Options>
            </Upper>
            <MixtureGrid />
            <TotalRow>
              <TotalLabel htmlFor="total">Total Moles:</TotalLabel>
              <TotalBox id="total">100</TotalBox>
            </TotalRow>
          </Sheet>
        </Main>
      </Work>
      <Footer><FooterContent /></Footer>
      <Rule />
      <Echo aria-hidden="true"><div><EchoFooter as="div"><FooterContent /></EchoFooter></div></Echo>
    </Page>
  );
}
